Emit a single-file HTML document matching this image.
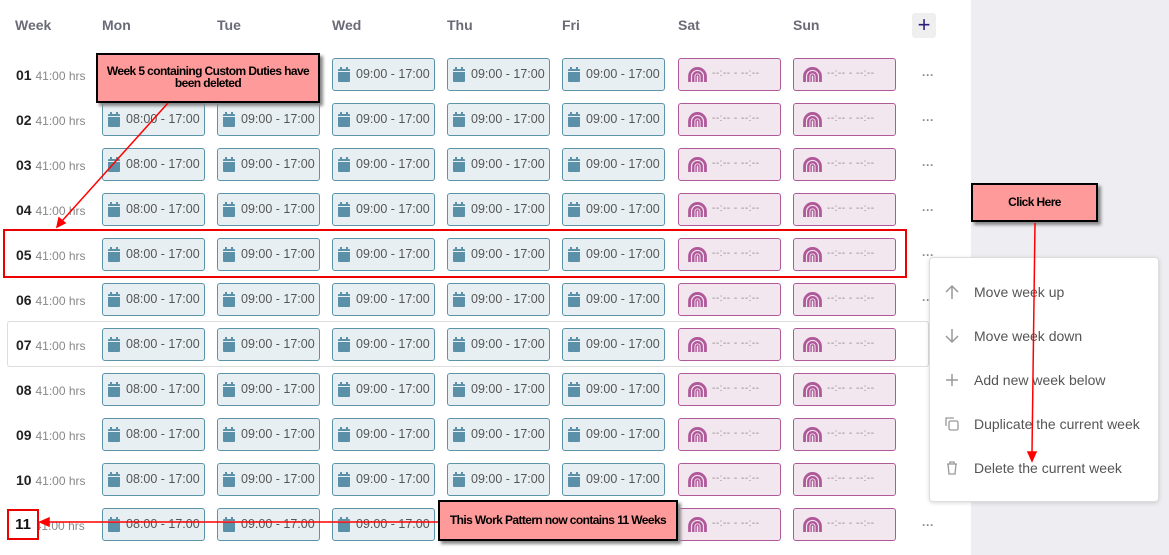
<!DOCTYPE html>
<html><head><meta charset="utf-8"><style>
*{margin:0;padding:0;box-sizing:border-box}
body{width:1169px;height:555px;overflow:hidden;background:#fff;font-family:"Liberation Sans",sans-serif;position:relative}
.side{position:absolute;left:971px;top:0;width:198px;height:555px;background:#eeedf2}
.h{position:absolute;top:17px;font-size:14px;color:#6b6b78;font-weight:bold}
.row{position:absolute;left:0;width:971px;height:45px}
.wk{position:absolute;left:16px;top:9px;font-size:14px;color:#222;font-weight:bold}
.wk span{font-weight:normal;color:#888;font-size:12px}
.c{position:absolute;top:0;width:103px;height:33px;border:1px solid #5b93a8;border-radius:3px;background:#e7eff2;font-size:12.5px;color:#555}
.c svg{position:absolute;left:5px;top:8px}
.c b{font-weight:normal;position:absolute;left:23px;top:8px}
.p{background:#f3e7ef;border-color:#b0599a}
.p svg{left:9px;top:8px}
.p b{left:33px;top:9px;font-size:10px;color:#888;letter-spacing:0.5px}
.d{position:absolute;left:922px;top:10px;color:#888;font-size:12px;font-weight:bold}
.call{position:absolute;background:#fe9a99;border:2px solid #000;box-shadow:3px 3px 3px #888;font-weight:bold;font-size:12px;text-align:center;color:#000;letter-spacing:-0.6px}
.menu{position:absolute;left:929px;top:257px;width:230px;height:245px;background:#fff;border:1px solid #ddd;border-radius:4px;box-shadow:0 1px 4px rgba(0,0,0,.15)}
.mi{position:absolute;left:44px;font-size:14px;color:#555}
.mi svg{position:absolute;left:-30px;top:0}
</style></head><body>
<svg width="0" height="0" style="position:absolute">
<defs>
<symbol id="cal" viewBox="0 0 12 15"><rect x="0" y="2" width="12" height="13" rx="1" fill="#5a90a8"/><rect x="2" y="0" width="2" height="4" fill="#5a90a8"/><rect x="8" y="0" width="2" height="4" fill="#5a90a8"/><rect x="0" y="4" width="12" height="1" fill="#e7eff2"/></symbol>
<symbol id="rb" viewBox="0 0 20 16"><path d="M1.5 16V10a8.5 8.5 0 0 1 17 0v6" fill="none" stroke="#b0599a" stroke-width="3"/><path d="M5.5 16V10a4.5 4.5 0 0 1 9 0v6" fill="none" stroke="#b0599a" stroke-width="2.5"/><path d="M8.5 16V10a1.5 1.5 0 0 1 3 0v6" fill="none" stroke="#b0599a" stroke-width="1.5"/></symbol>
</defs></svg>
<div class="side"></div>
<div class="h" style="left:15px">Week</div><div class="h" style="left:102px">Mon</div><div class="h" style="left:217px">Tue</div><div class="h" style="left:332px">Wed</div><div class="h" style="left:447px">Thu</div><div class="h" style="left:562px">Fri</div><div class="h" style="left:678px">Sat</div><div class="h" style="left:793px">Sun</div>
<div style="position:absolute;left:912px;top:13px;width:24px;height:25px;background:#efefef;border-radius:3px;color:#2a1f7a;font-size:22px;text-align:center;line-height:24px">+</div>

<div style="position:absolute;left:7px;top:321px;width:922px;height:46px;border:1px solid #ddd;border-radius:3px"></div>

<div class="row" style="top:58px"><div class="wk">01 <span>41:00 hrs</span></div><div class="c" style="left:102px"><svg width="12" height="15"><use href="#cal"/></svg><b>08:00 - 17:00</b></div><div class="c" style="left:217px"><svg width="12" height="15"><use href="#cal"/></svg><b>09:00 - 17:00</b></div><div class="c" style="left:332px"><svg width="12" height="15"><use href="#cal"/></svg><b>09:00 - 17:00</b></div><div class="c" style="left:447px"><svg width="12" height="15"><use href="#cal"/></svg><b>09:00 - 17:00</b></div><div class="c" style="left:562px"><svg width="12" height="15"><use href="#cal"/></svg><b>09:00 - 17:00</b></div><div class="c p" style="left:678px"><svg width="19" height="15"><use href="#rb"/></svg><b>--:-- - --:--</b></div><div class="c p" style="left:793px"><svg width="19" height="15"><use href="#rb"/></svg><b>--:-- - --:--</b></div><div class="d">···</div></div>
<div class="row" style="top:103px"><div class="wk">02 <span>41:00 hrs</span></div><div class="c" style="left:102px"><svg width="12" height="15"><use href="#cal"/></svg><b>08:00 - 17:00</b></div><div class="c" style="left:217px"><svg width="12" height="15"><use href="#cal"/></svg><b>09:00 - 17:00</b></div><div class="c" style="left:332px"><svg width="12" height="15"><use href="#cal"/></svg><b>09:00 - 17:00</b></div><div class="c" style="left:447px"><svg width="12" height="15"><use href="#cal"/></svg><b>09:00 - 17:00</b></div><div class="c" style="left:562px"><svg width="12" height="15"><use href="#cal"/></svg><b>09:00 - 17:00</b></div><div class="c p" style="left:678px"><svg width="19" height="15"><use href="#rb"/></svg><b>--:-- - --:--</b></div><div class="c p" style="left:793px"><svg width="19" height="15"><use href="#rb"/></svg><b>--:-- - --:--</b></div><div class="d">···</div></div>
<div class="row" style="top:148px"><div class="wk">03 <span>41:00 hrs</span></div><div class="c" style="left:102px"><svg width="12" height="15"><use href="#cal"/></svg><b>08:00 - 17:00</b></div><div class="c" style="left:217px"><svg width="12" height="15"><use href="#cal"/></svg><b>09:00 - 17:00</b></div><div class="c" style="left:332px"><svg width="12" height="15"><use href="#cal"/></svg><b>09:00 - 17:00</b></div><div class="c" style="left:447px"><svg width="12" height="15"><use href="#cal"/></svg><b>09:00 - 17:00</b></div><div class="c" style="left:562px"><svg width="12" height="15"><use href="#cal"/></svg><b>09:00 - 17:00</b></div><div class="c p" style="left:678px"><svg width="19" height="15"><use href="#rb"/></svg><b>--:-- - --:--</b></div><div class="c p" style="left:793px"><svg width="19" height="15"><use href="#rb"/></svg><b>--:-- - --:--</b></div><div class="d">···</div></div>
<div class="row" style="top:193px"><div class="wk">04 <span>41:00 hrs</span></div><div class="c" style="left:102px"><svg width="12" height="15"><use href="#cal"/></svg><b>08:00 - 17:00</b></div><div class="c" style="left:217px"><svg width="12" height="15"><use href="#cal"/></svg><b>09:00 - 17:00</b></div><div class="c" style="left:332px"><svg width="12" height="15"><use href="#cal"/></svg><b>09:00 - 17:00</b></div><div class="c" style="left:447px"><svg width="12" height="15"><use href="#cal"/></svg><b>09:00 - 17:00</b></div><div class="c" style="left:562px"><svg width="12" height="15"><use href="#cal"/></svg><b>09:00 - 17:00</b></div><div class="c p" style="left:678px"><svg width="19" height="15"><use href="#rb"/></svg><b>--:-- - --:--</b></div><div class="c p" style="left:793px"><svg width="19" height="15"><use href="#rb"/></svg><b>--:-- - --:--</b></div><div class="d">···</div></div>
<div class="row" style="top:238px"><div class="wk">05 <span>41:00 hrs</span></div><div class="c" style="left:102px"><svg width="12" height="15"><use href="#cal"/></svg><b>08:00 - 17:00</b></div><div class="c" style="left:217px"><svg width="12" height="15"><use href="#cal"/></svg><b>09:00 - 17:00</b></div><div class="c" style="left:332px"><svg width="12" height="15"><use href="#cal"/></svg><b>09:00 - 17:00</b></div><div class="c" style="left:447px"><svg width="12" height="15"><use href="#cal"/></svg><b>09:00 - 17:00</b></div><div class="c" style="left:562px"><svg width="12" height="15"><use href="#cal"/></svg><b>09:00 - 17:00</b></div><div class="c p" style="left:678px"><svg width="19" height="15"><use href="#rb"/></svg><b>--:-- - --:--</b></div><div class="c p" style="left:793px"><svg width="19" height="15"><use href="#rb"/></svg><b>--:-- - --:--</b></div><div class="d">···</div></div>
<div class="row" style="top:283px"><div class="wk">06 <span>41:00 hrs</span></div><div class="c" style="left:102px"><svg width="12" height="15"><use href="#cal"/></svg><b>08:00 - 17:00</b></div><div class="c" style="left:217px"><svg width="12" height="15"><use href="#cal"/></svg><b>09:00 - 17:00</b></div><div class="c" style="left:332px"><svg width="12" height="15"><use href="#cal"/></svg><b>09:00 - 17:00</b></div><div class="c" style="left:447px"><svg width="12" height="15"><use href="#cal"/></svg><b>09:00 - 17:00</b></div><div class="c" style="left:562px"><svg width="12" height="15"><use href="#cal"/></svg><b>09:00 - 17:00</b></div><div class="c p" style="left:678px"><svg width="19" height="15"><use href="#rb"/></svg><b>--:-- - --:--</b></div><div class="c p" style="left:793px"><svg width="19" height="15"><use href="#rb"/></svg><b>--:-- - --:--</b></div><div class="d">···</div></div>
<div class="row" style="top:328px"><div class="wk">07 <span>41:00 hrs</span></div><div class="c" style="left:102px"><svg width="12" height="15"><use href="#cal"/></svg><b>08:00 - 17:00</b></div><div class="c" style="left:217px"><svg width="12" height="15"><use href="#cal"/></svg><b>09:00 - 17:00</b></div><div class="c" style="left:332px"><svg width="12" height="15"><use href="#cal"/></svg><b>09:00 - 17:00</b></div><div class="c" style="left:447px"><svg width="12" height="15"><use href="#cal"/></svg><b>09:00 - 17:00</b></div><div class="c" style="left:562px"><svg width="12" height="15"><use href="#cal"/></svg><b>09:00 - 17:00</b></div><div class="c p" style="left:678px"><svg width="19" height="15"><use href="#rb"/></svg><b>--:-- - --:--</b></div><div class="c p" style="left:793px"><svg width="19" height="15"><use href="#rb"/></svg><b>--:-- - --:--</b></div></div>
<div class="row" style="top:373px"><div class="wk">08 <span>41:00 hrs</span></div><div class="c" style="left:102px"><svg width="12" height="15"><use href="#cal"/></svg><b>08:00 - 17:00</b></div><div class="c" style="left:217px"><svg width="12" height="15"><use href="#cal"/></svg><b>09:00 - 17:00</b></div><div class="c" style="left:332px"><svg width="12" height="15"><use href="#cal"/></svg><b>09:00 - 17:00</b></div><div class="c" style="left:447px"><svg width="12" height="15"><use href="#cal"/></svg><b>09:00 - 17:00</b></div><div class="c" style="left:562px"><svg width="12" height="15"><use href="#cal"/></svg><b>09:00 - 17:00</b></div><div class="c p" style="left:678px"><svg width="19" height="15"><use href="#rb"/></svg><b>--:-- - --:--</b></div><div class="c p" style="left:793px"><svg width="19" height="15"><use href="#rb"/></svg><b>--:-- - --:--</b></div></div>
<div class="row" style="top:418px"><div class="wk">09 <span>41:00 hrs</span></div><div class="c" style="left:102px"><svg width="12" height="15"><use href="#cal"/></svg><b>08:00 - 17:00</b></div><div class="c" style="left:217px"><svg width="12" height="15"><use href="#cal"/></svg><b>09:00 - 17:00</b></div><div class="c" style="left:332px"><svg width="12" height="15"><use href="#cal"/></svg><b>09:00 - 17:00</b></div><div class="c" style="left:447px"><svg width="12" height="15"><use href="#cal"/></svg><b>09:00 - 17:00</b></div><div class="c" style="left:562px"><svg width="12" height="15"><use href="#cal"/></svg><b>09:00 - 17:00</b></div><div class="c p" style="left:678px"><svg width="19" height="15"><use href="#rb"/></svg><b>--:-- - --:--</b></div><div class="c p" style="left:793px"><svg width="19" height="15"><use href="#rb"/></svg><b>--:-- - --:--</b></div></div>
<div class="row" style="top:463px"><div class="wk">10 <span>41:00 hrs</span></div><div class="c" style="left:102px"><svg width="12" height="15"><use href="#cal"/></svg><b>08:00 - 17:00</b></div><div class="c" style="left:217px"><svg width="12" height="15"><use href="#cal"/></svg><b>09:00 - 17:00</b></div><div class="c" style="left:332px"><svg width="12" height="15"><use href="#cal"/></svg><b>09:00 - 17:00</b></div><div class="c" style="left:447px"><svg width="12" height="15"><use href="#cal"/></svg><b>09:00 - 17:00</b></div><div class="c" style="left:562px"><svg width="12" height="15"><use href="#cal"/></svg><b>09:00 - 17:00</b></div><div class="c p" style="left:678px"><svg width="19" height="15"><use href="#rb"/></svg><b>--:-- - --:--</b></div><div class="c p" style="left:793px"><svg width="19" height="15"><use href="#rb"/></svg><b>--:-- - --:--</b></div></div>
<div class="row" style="top:508px"><div class="wk">11 <span>41:00 hrs</span></div><div class="c" style="left:102px"><svg width="12" height="15"><use href="#cal"/></svg><b>08:00 - 17:00</b></div><div class="c" style="left:217px"><svg width="12" height="15"><use href="#cal"/></svg><b>09:00 - 17:00</b></div><div class="c" style="left:332px"><svg width="12" height="15"><use href="#cal"/></svg><b>09:00 - 17:00</b></div><div class="c" style="left:447px"><svg width="12" height="15"><use href="#cal"/></svg><b>09:00 - 17:00</b></div><div class="c" style="left:562px"><svg width="12" height="15"><use href="#cal"/></svg><b>09:00 - 17:00</b></div><div class="c p" style="left:678px"><svg width="19" height="15"><use href="#rb"/></svg><b>--:-- - --:--</b></div><div class="c p" style="left:793px"><svg width="19" height="15"><use href="#rb"/></svg><b>--:-- - --:--</b></div><div class="d">···</div></div>

<div class="menu">
<div class="mi" style="top:26px"><svg width="16" height="16" viewBox="0 0 16 16"><path d="M8 15V2M2 8l6-6 6 6" fill="none" stroke="#999" stroke-width="1.5"/></svg>Move week up</div>
<div class="mi" style="top:70px"><svg width="16" height="16" viewBox="0 0 16 16"><path d="M8 1v13M2 8l6 6 6-6" fill="none" stroke="#999" stroke-width="1.5"/></svg>Move week down</div>
<div class="mi" style="top:114px"><svg width="16" height="16" viewBox="0 0 16 16"><path d="M8 2v12M2 8h12" fill="none" stroke="#999" stroke-width="1.5"/></svg>Add new week below</div>
<div class="mi" style="top:158px"><svg width="16" height="16" viewBox="0 0 16 16"><path d="M2 10V2h8" fill="none" stroke="#999" stroke-width="1.3"/><rect x="5" y="5" width="9" height="9" rx="1.5" fill="none" stroke="#999" stroke-width="1.3"/></svg>Duplicate the current week</div>
<div class="mi" style="top:202px"><svg width="16" height="16" viewBox="0 0 16 16"><path d="M3 4h10M6 4V2h4v2M4 4l1 10h6l1-10" fill="none" stroke="#999" stroke-width="1.3"/></svg>Delete the current week</div>
</div>

<div style="position:absolute;left:3px;top:229px;width:904px;height:49px;border:2px solid #e00"></div>
<div style="position:absolute;left:7px;top:509px;width:32px;height:31px;border:2px solid #e00;background:#fff;font-size:15px;font-weight:bold;text-align:center;line-height:27px;color:#111">11</div>

<div class="call" style="left:96px;top:53px;width:224px;height:50px;padding-top:10px;line-height:12px">Week 5 containing Custom Duties have<br>been deleted</div>
<div class="call" style="left:971px;top:183px;width:127px;height:39px;line-height:35px">Click Here</div>
<div class="call" style="left:438px;top:500px;width:240px;height:41px;line-height:37px;font-size:12px">This Work Pattern now contains 11 Weeks</div>

<svg width="1169" height="555" style="position:absolute;left:0;top:0;pointer-events:none">
<g stroke="#f00" stroke-width="1.5" fill="#f00">
<line x1="168" y1="103" x2="62" y2="221"/><path d="M57 227l2-9 6 5z"/>
<line x1="1035" y1="223" x2="1032" y2="452"/><path d="M1032 461l-4-9h8z"/>
<line x1="438" y1="522" x2="48" y2="522"/><path d="M40 522l9-4v8z"/>
</g></svg>
</body></html>
